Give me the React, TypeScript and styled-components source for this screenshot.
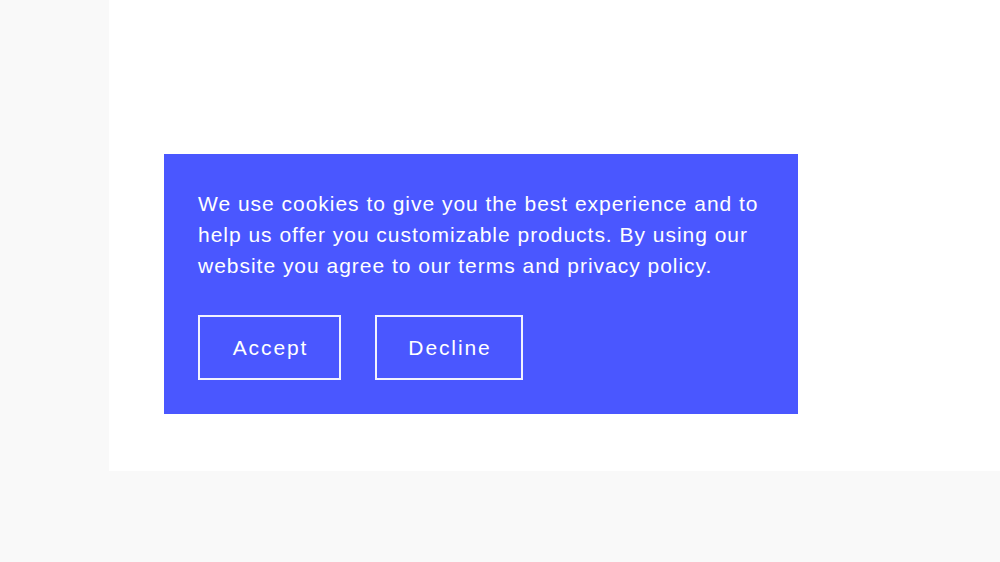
import React from 'react'
import styled, { createGlobalStyle } from 'styled-components'

const GlobalStyle = createGlobalStyle`
  html, body {
    margin: 0;
    padding: 0;
    background: #f9f9f9;
  }
  * {
    box-sizing: border-box;
  }
`

const Page = styled.div`
  width: 1000px;
  height: 562px;
  background: #f9f9f9;
  padding-left: 109px;
`

const Panel = styled.div`
  width: 891px;
  height: 471px;
  background: #ffffff;
  padding: 154px 0 0 55px;
`

const Banner = styled.section`
  width: 634px;
  background: #4a57ff;
  padding: 34px 34px 34px;
  font-family: 'Liberation Sans', Arial, sans-serif;
  color: #ffffff;
`

const Message = styled.p`
  margin: 0;
  font-size: 21px;
  line-height: 31px;
  letter-spacing: 0.98px;
`

const Actions = styled.div`
  display: flex;
  gap: 34px;
  margin-top: 34px;
`

const ActionBtn = styled.button<{ $width: number }>`
  width: ${(p) => p.$width}px;
  height: 65px;
  background: transparent;
  border: 2px solid rgba(255, 255, 255, 0.92);
  color: #ffffff;
  font-family: 'Liberation Sans', Arial, sans-serif;
  font-size: 21px;
  letter-spacing: 1.9px;
  cursor: pointer;
  padding: 0 0 0 2px;
  line-height: 1;

  &:hover {
    background: rgba(255, 255, 255, 0.08);
  }
`

const App: React.FC = () => {
  return (
    <>
      <GlobalStyle />
      <Page>
        <Panel>
          <Banner>
            <Message>
              We use cookies to give you the best experience and to
              <br />
              help us offer you customizable products. By using our
              <br />
              website you agree to our terms and privacy policy.
            </Message>
            <Actions>
              <ActionBtn $width={143}>Accept</ActionBtn>
              <ActionBtn $width={148}>Decline</ActionBtn>
            </Actions>
          </Banner>
        </Panel>
      </Page>
    </>
  )
}

export default App
